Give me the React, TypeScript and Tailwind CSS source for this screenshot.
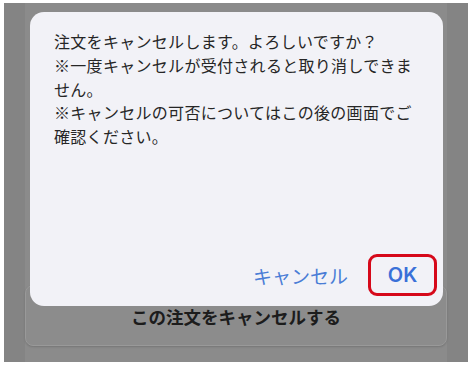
import React from "react";

const jp = { fontFamily: '"Noto Sans CJK JP", "Noto Sans", sans-serif' };

export default function App() {
  return (
    <div className="w-[474px] h-[368px] bg-white pl-[4px] pt-[3px] pr-[6px] pb-[6px]" style={jp}>
      <div className="relative h-full w-full bg-[#848484] flex">
        {/* page content under the overlay */}
        <div className="ml-[21px] w-[422px] h-full bg-[#8b8b8b] flex flex-col justify-end pb-[16px]">
          <div className="h-[61px] rounded-[8px] border border-[#999999] shadow-[0_1px_2px_rgba(0,0,0,0.15)] bg-[#8c8c8c] flex items-center justify-center">
            <span className="text-[17.5px] font-bold text-[#1c1c1c] leading-none mt-[3px]">この注文をキャンセルする</span>
          </div>
        </div>

        {/* alert dialog */}
        <div className="absolute left-[26px] top-[9px] w-[413px] h-[294px] rounded-[14px] bg-[#f2f2f7] flex flex-col">
          <p className="px-[24px] pt-[18px] text-[16px] tracking-[0.3px] leading-[23.8px] text-[#262626]">
            注文をキャンセルします。よろしいですか？
            <br />
            ※一度キャンセルが受付されると取り消しできません。
            <br />
            ※キャンセルの可否についてはこの後の画面でご確認ください。
          </p>
          <div className="flex-1" />
          <div className="flex items-center justify-end gap-[20px] pr-[6px] pb-[10px]">
            <button className="text-[19px] text-[#4a7dd6] leading-none">キャンセル</button>
            <button
              className="w-[69px] h-[42px] rounded-[9px] border-[3px] border-[#d6091a] flex items-center justify-center text-[20px] font-semibold text-[#3a70d8] leading-none"
              style={{ fontFamily: 'Inter, "Noto Sans", sans-serif' }}
            >
              OK
            </button>
          </div>
        </div>
      </div>
    </div>
  );
}
